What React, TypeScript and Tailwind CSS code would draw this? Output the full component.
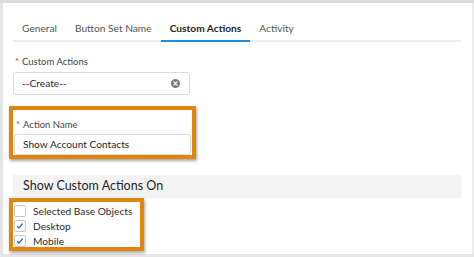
import React from "react";

function Check({ checked }: { checked: boolean }) {
  return (
    <div className="w-[12px] h-[12px] shrink-0 border border-[#c9c9c9] rounded-[2px] bg-white flex items-center justify-center">
      {checked && (
        <svg width="8" height="8" viewBox="0 0 8 8">
          <path d="M1.4 4.4 L3.1 5.9 L6.4 2" fill="none" stroke="#1b6fc9" strokeWidth="1.3" strokeLinecap="round" strokeLinejoin="round" />
        </svg>
      )}
    </div>
  );
}

export default function App() {
  return (
    <div className="w-[474px] h-[257px] bg-white relative overflow-hidden text-[#3e3e3c]" style={{ fontFamily: "Lato, 'Open Sans', sans-serif" }}>
      <div className="h-[3px] bg-[#dcdcdc]" />
      <div className="flex h-[251px]">
        <div className="w-[3px] bg-[#e4e4e4]" />
        <div className="flex-1 flex flex-col">
          {/* tabs */}
          <div className="ml-[10px] mr-[11px] mt-[14px] flex border-b-2 border-[#ececec] h-[25px]">
            <div className="px-[9px] text-[10.2px] text-[#555] leading-[22px] whitespace-nowrap">General</div>
            <div className="px-[9px] text-[10.2px] text-[#555] leading-[22px] whitespace-nowrap">Button Set Name</div>
            <div className="px-[9px] text-[10.2px] text-[#1f1f1f] font-bold leading-[22px] border-b-2 border-[#1b8ce0] mb-[-2px] whitespace-nowrap">Custom Actions</div>
            <div className="px-[9px] text-[10.2px] text-[#555] leading-[22px] whitespace-nowrap">Activity</div>
          </div>
          {/* custom actions field */}
          <div className="ml-[10px] mt-[14px] text-[9.5px] leading-[12px] text-[#444] whitespace-nowrap">
            <span className="text-[#c23934] mr-[3px] ml-[2px]">*</span>Custom Actions
          </div>
          <div className="ml-[10px] mt-[4px] w-[177px] h-[23px] border border-[#dddbda] rounded-[3px] flex items-center justify-between pl-[8px] pr-[9px] text-[10.2px] text-[#2b2b2b]">
            <span>--Create--</span>
            <svg width="9" height="9" viewBox="0 0 10 10">
              <circle cx="5" cy="5" r="5" fill="#7a7a7a" />
              <path d="M3.2 3.2 L6.8 6.8 M6.8 3.2 L3.2 6.8" stroke="white" strokeWidth="1.3" strokeLinecap="round" />
            </svg>
          </div>
          {/* action name orange box */}
          <div className="ml-[6px] mt-[11px] w-[187px] h-[53px] border-[4px] border-[#e0860f] shadow-[1px_2px_3px_rgba(0,0,0,0.35)] bg-white flex flex-col">
            <div className="ml-[3px] mt-[9px] text-[9.5px] leading-[12px] text-[#444] whitespace-nowrap">
              <span className="text-[#c23934] mr-[3px]">*</span>Action Name
            </div>
            <div className="ml-[1px] mt-[3px] w-[177px] h-[23px] border border-[#dddbda] rounded-[3px] flex items-center pl-[8px] text-[10.2px] text-[#1f1f1f] whitespace-nowrap">
              Show Account Contacts
            </div>
          </div>
          {/* section header */}
          <div className="ml-[10px] mr-[12px] mt-[16px] h-[22px] bg-[#f3f3f3] flex items-center pl-[10px] text-[12.5px] text-[#1f1f1f] shadow-[1px_1px_2px_rgba(0,0,0,0.08)] whitespace-nowrap">
            Show Custom Actions On
          </div>
          {/* checkbox orange box */}
          <div className="ml-[6px] mt-[1px] w-[135px] h-[53px] border-[4px] border-[#e0860f] shadow-[1px_2px_3px_rgba(0,0,0,0.35)] bg-white flex flex-col gap-[3px] pt-[3px] pl-[1px]">
            <div className="flex items-center gap-[7px] text-[10.2px] leading-[12px] text-[#2b2b2b] whitespace-nowrap">
              <Check checked={false} />
              <span>Selected Base Objects</span>
            </div>
            <div className="flex items-center gap-[7px] text-[10.2px] leading-[12px] text-[#2b2b2b] whitespace-nowrap">
              <Check checked={true} />
              <span>Desktop</span>
            </div>
            <div className="flex items-center gap-[7px] text-[10.2px] leading-[12px] text-[#2b2b2b] whitespace-nowrap">
              <Check checked={true} />
              <span>Mobile</span>
            </div>
          </div>
        </div>
        <div className="w-[2px] bg-[#ececec]" />
      </div>
      <div className="h-[3px] bg-[#e6e6e6]" />
    </div>
  );
}
